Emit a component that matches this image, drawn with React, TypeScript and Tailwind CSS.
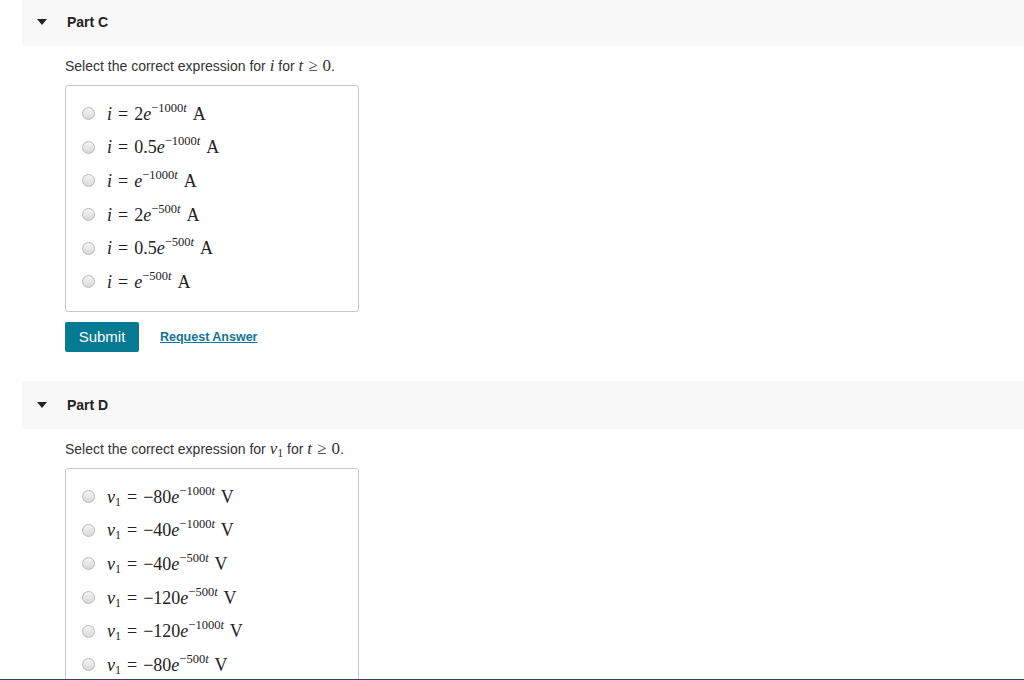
import React from "react";

const Radio = () => (
  <span className="inline-block w-[13px] h-[13px] rounded-full border border-[#b8b8b8] bg-gradient-to-b from-[#f4f4f4] to-[#d9d9d9] shrink-0" />
);

type Opt = { lhs: React.ReactNode; coef: string; exp: string; unit: string };

const I = () => <span className="italic">i</span>;
const V1 = () => (
  <span>
    <span className="italic">v</span>
    <span className="text-[12px] relative top-[3px]">1</span>
  </span>
);

const Row = ({ o }: { o: Opt }) => (
  <div className="h-[33.6px] flex items-center pl-[16px]">
    <Radio />
    <span className="ml-[12px] font-['Liberation_Serif',serif] text-[18px] text-[#222] whitespace-nowrap leading-none">
      {o.lhs}
      <span className="mx-[6px]">=</span>
      {o.coef}
      <span className="italic">e</span>
      <span className="text-[12.5px] relative top-[-8px]">
        −{o.exp}
        <span className="italic">t</span>
      </span>
      <span className="ml-[6px]">{o.unit}</span>
    </span>
  </div>
);

const Header = ({ title, cls }: { title: string; cls?: string }) => (
  <div className={`h-[48px] bg-[#f8f8f8] flex items-center ${cls ?? ""}`}>
    <span className="ml-[15px] w-0 h-0 border-l-[5px] border-r-[5px] border-t-[6px] border-l-transparent border-r-transparent border-t-[#222]" />
    <span className="ml-[20px] font-['Liberation_Sans',Arial,sans-serif] font-bold text-[14px] text-[#222]">
      {title}
    </span>
  </div>
);

const Question = ({ v }: { v: React.ReactNode }) => (
  <div className="mt-[10px] ml-[43px] h-[20px] flex items-center font-['Liberation_Sans',Arial,sans-serif] text-[14px] text-[#333]">
    <span>Select the correct expression for&nbsp;</span>
    <span className="font-['Liberation_Serif',serif] text-[17px]">{v}</span>
    <span>&nbsp;for&nbsp;</span>
    <span className="font-['Liberation_Serif',serif] text-[17px]">
      <span className="italic">t</span>
      <span className="mx-[5px]">≥</span>0
    </span>
    <span>.</span>
  </div>
);

const cOpts: Opt[] = [
  { lhs: <I />, coef: "2", exp: "1000", unit: "A" },
  { lhs: <I />, coef: "0.5", exp: "1000", unit: "A" },
  { lhs: <I />, coef: "", exp: "1000", unit: "A" },
  { lhs: <I />, coef: "2", exp: "500", unit: "A" },
  { lhs: <I />, coef: "0.5", exp: "500", unit: "A" },
  { lhs: <I />, coef: "", exp: "500", unit: "A" },
];

const dOpts: Opt[] = [
  { lhs: <V1 />, coef: "−80", exp: "1000", unit: "V" },
  { lhs: <V1 />, coef: "−40", exp: "1000", unit: "V" },
  { lhs: <V1 />, coef: "−40", exp: "500", unit: "V" },
  { lhs: <V1 />, coef: "−120", exp: "500", unit: "V" },
  { lhs: <V1 />, coef: "−120", exp: "1000", unit: "V" },
  { lhs: <V1 />, coef: "−80", exp: "500", unit: "V" },
];

export default function App() {
  return (
    <div className="w-[1024px] h-[680px] overflow-hidden bg-white relative">
      <div className="pl-[22px]">
        <Header title="Part C" cls="-mt-[2px]" />
        <Question v={<I />} />
        <div className="mt-[9px] ml-[43px] w-[294px] h-[227px] border border-[#c8c8c8] rounded-[3px] pt-[11px]">
          {cOpts.map((o, i) => (
            <Row key={i} o={o} />
          ))}
        </div>
        <div className="mt-[10px] ml-[43px] flex items-center">
          <button className="w-[74px] h-[30px] bg-[#057a92] rounded-[2px] text-white font-['Liberation_Sans',Arial,sans-serif] text-[15px]">
            Submit
          </button>
          <span className="ml-[21px] font-['Liberation_Sans',Arial,sans-serif] font-bold text-[12.5px] text-[#0f7694] underline">
            Request Answer
          </span>
        </div>
        <Header title="Part D" cls="mt-[29px]" />
        <Question v={<V1 />} />
        <div className="mt-[9px] ml-[43px] w-[294px] h-[260px] border border-[#c8c8c8] rounded-[3px] pt-[11px]">
          {dOpts.map((o, i) => (
            <Row key={i} o={o} />
          ))}
        </div>
      </div>
      <div className="absolute left-0 right-0 bottom-0 h-[1px] bg-[#2c4466]" />
    </div>
  );
}
